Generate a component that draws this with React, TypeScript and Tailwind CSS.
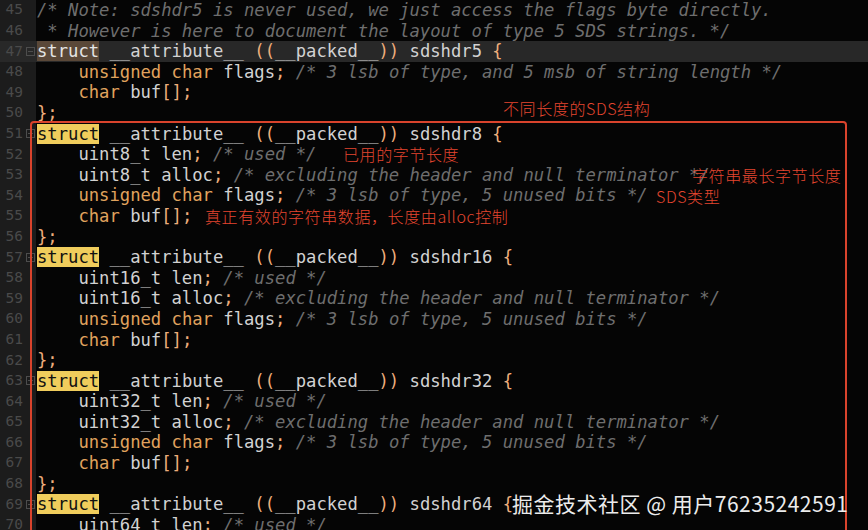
import React from 'react';

type Seg = [string, string];

const LH = 20.6;

const structLine = (name: string, current = false): Seg[] => [
  [current ? 'S' : 's', 'struct'],
  ['t', ' __attribute__ '],
  ['p', '(('],
  ['t', '__packed__'],
  ['p', '))'],
  ['t', ` ${name} `],
  ['p', '{'],
];

const body = (type: string): Seg[][] => [
  [['t', `    ${type} len`], ['p', ';'], ['t', ' '], ['c', '/* used */']],
  [['t', `    ${type} alloc`], ['p', ';'], ['t', ' '], ['c', '/* excluding the header and null terminator */']],
  [['t', '    '], ['k', 'unsigned char'], ['t', ' flags'], ['p', ';'], ['t', ' '], ['c', '/* 3 lsb of type, 5 unused bits */']],
  [['t', '    '], ['k', 'char'], ['t', ' buf'], ['p', '[];']],
  [['p', '};']],
];

const lines: Seg[][] = [
  [['c', '/* Note: sdshdr5 is never used, we just access the flags byte directly.']],
  [['c', ' * However is here to document the layout of type 5 SDS strings. */']],
  structLine('sdshdr5', true),
  [['t', '    '], ['k', 'unsigned char'], ['t', ' flags'], ['p', ';'], ['t', ' '], ['c', '/* 3 lsb of type, and 5 msb of string length */']],
  [['t', '    '], ['k', 'char'], ['t', ' buf'], ['p', '[];']],
  [['p', '};']],
  structLine('sdshdr8'),
  ...body('uint8_t'),
  structLine('sdshdr16'),
  ...body('uint16_t'),
  structLine('sdshdr32'),
  ...body('uint32_t'),
  structLine('sdshdr64'),
  [['t', '    uint64_t len'], ['p', ';'], ['t', ' '], ['c', '/* used */']],
];

const segClass: Record<string, string> = {
  t: 'text-[#d2d2d2]',
  k: 'text-[#e0a35e]',
  p: 'text-[#eeae7c]',
  c: 'text-[#6e6e6e] italic',
  s: 'bg-[#f0cd5c] text-[#111]',
  S: 'bg-[#5a4838] text-[#e4e4e4]',
};

function FoldMark() {
  return (
    <svg width="9" height="9" viewBox="0 0 9 9" className="shrink-0">
      <rect x="0.5" y="0.5" width="8" height="8" fill="none" stroke="#4d4d4d" />
      <line x1="2" y1="4.5" x2="7" y2="4.5" stroke="#4d4d4d" />
    </svg>
  );
}

// 红色批注，按行号定位
const notes: { line: number; x: number; text: string }[] = [
  { line: 52, x: 343, text: '已用的字节长度' },
  { line: 53, x: 692, text: '字符串最长字节长度' },
  { line: 54, x: 656, text: 'SDS类型' },
  { line: 55, x: 205, text: '真正有效的字符串数据，长度由alloc控制' },
];

export default function App() {
  return (
    <div className="relative w-[868px] h-[530px] overflow-hidden bg-[#050505] font-['DejaVu_Sans_Mono',monospace] text-[17.2px]">
      <div className="flex flex-col">
        {lines.map((segs, i) => {
          const num = 45 + i;
          const current = num === 47;
          const fold = segs[0][0] === 's' || segs[0][0] === 'S';
          return (
            <div key={num} className={`flex h-[20.6px] items-center ${current ? 'bg-[#282828]' : ''}`}>
              <div className={`flex h-full w-[36px] shrink-0 items-center ${current ? 'bg-[#282828]' : 'bg-[#1c1c1c]'}`}>
                <span className="w-[24px] pr-[1px] text-right text-[14.5px] text-[#4a4a4a]">{num}</span>
                <span className="flex w-[12px] justify-center">{fold && <FoldMark />}</span>
              </div>
              <div className="whitespace-pre pl-[1px] leading-[20.6px]">
                {segs.map(([k, txt], j) => (
                  <span key={j} className={segClass[k]}>{txt}</span>
                ))}
              </div>
            </div>
          );
        })}
      </div>

      {/* 框出不同长度的结构体 */}
      <div className="absolute left-[30px] top-[121px] h-[440px] w-[817px] rounded-[4px] border-2 border-[#d9432c]" />
      <div className="absolute left-[503px] top-[97px] font-['Noto_Sans_CJK_SC',sans-serif] text-[16px] font-light leading-[22px] tracking-[0.6px] text-[#e4462f]">
        不同长度的SDS结构
      </div>

      {notes.map((n) => (
        <div
          key={n.line}
          className="absolute flex h-[20.6px] items-center whitespace-nowrap font-['Noto_Sans_CJK_SC',sans-serif] text-[16px] font-light tracking-[0.6px] text-[#e4462f]"
          style={{ left: n.x, top: (n.line - 45) * LH }}
        >
          {n.text}
        </div>
      ))}

      <div className="absolute left-[512px] top-[489px] whitespace-nowrap font-['Noto_Sans_CJK_SC',sans-serif] text-[21px] leading-[28px] tracking-[0.5px] text-[#ececec]">
        掘金技术社区 @ 用户76235242591
      </div>
    </div>
  );
}
